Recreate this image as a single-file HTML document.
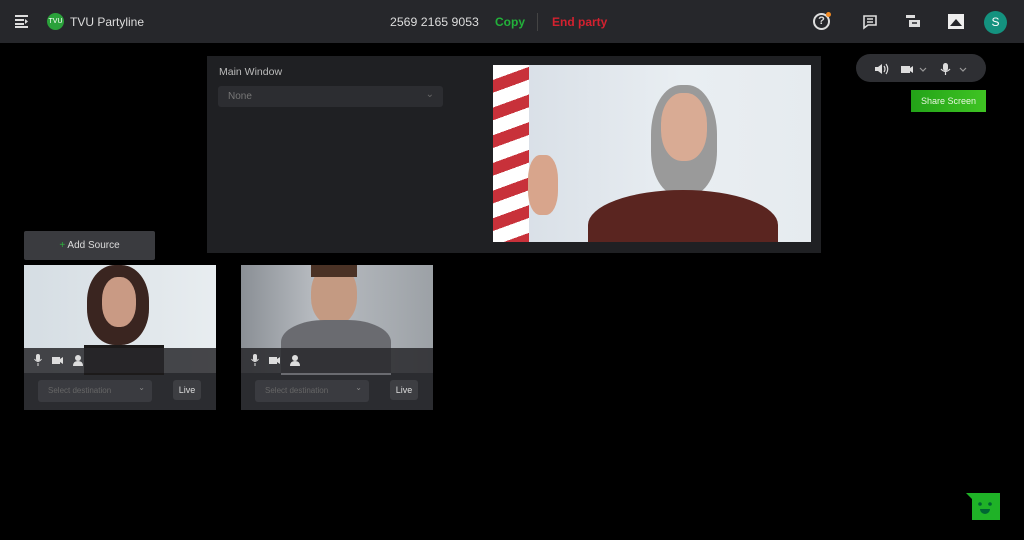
<!DOCTYPE html>
<html><head><meta charset="utf-8"><style>
*{margin:0;padding:0;box-sizing:border-box}
body{width:1024px;height:540px;background:#000;font-family:"Liberation Sans",sans-serif;position:relative;overflow:hidden;color:#ddd}
.hdr{position:absolute;left:0;top:0;width:1024px;height:43px;background:#26272b}
.abs{position:absolute}
.panel{left:207px;top:56px;width:614px;height:197px;background:#1f2023}
.card{position:absolute;top:265px;width:192px;height:145px;background:#2b2c30;overflow:hidden}
.ctrl{position:absolute;left:0;top:83px;width:192px;height:25px;background:rgba(40,40,44,.85)}
.sel{position:absolute;left:14px;top:115px;width:114px;height:22px;background:#3a3b40;border-radius:3px;font-size:8px;color:#666;padding:6px 10px}
.live{position:absolute;left:149px;top:115px;width:28px;height:20px;background:#3d3e42;border-radius:3px;font-size:9px;color:#ddd;text-align:center;line-height:20px}
</style></head><body>
<div class="hdr"></div>
<svg class="abs" style="left:15px;top:15px" width="14" height="13"><g fill="#ddd"><rect x="0" y="0" width="13" height="2"/><rect x="0" y="4" width="9" height="2"/><rect x="0" y="8" width="9" height="2"/><rect x="0" y="11" width="13" height="2"/><path d="M10 4l3 2.5-3 2.5z"/></g></svg>
<div class="abs" style="left:47px;top:13px;width:17px;height:17px;border-radius:50%;background:#2aa13a;font-size:7px;color:#fff;text-align:center;line-height:17px">TVU</div>
<div class="abs" style="left:70px;top:15px;font-size:12px;color:#ddd">TVU Partyline</div>
<div class="abs" style="left:390px;top:15px;font-size:12.3px;color:#ddd">2569 2165 9053</div>
<div class="abs" style="left:495px;top:15px;font-size:12px;color:#22b13a;font-weight:bold">Copy</div>
<div class="abs" style="left:537px;top:13px;width:1px;height:18px;background:#444"></div>
<div class="abs" style="left:552px;top:15px;font-size:12px;color:#d3212f;font-weight:bold">End party</div>
<div class="abs" style="left:813px;top:13px;width:17px;height:17px;border:2px solid #ddd;border-radius:50%;font-size:11px;font-weight:bold;color:#ddd;text-align:center;line-height:13px">?</div>
<div class="abs" style="left:826px;top:12px;width:5px;height:5px;border-radius:50%;background:#f08a24"></div>
<svg class="abs" style="left:862px;top:14px" width="16" height="16"><path d="M2 2h12v9H6l-4 3z" fill="none" stroke="#ddd" stroke-width="1.6"/><path d="M5 5h6M5 8h6" stroke="#ddd" stroke-width="1.4"/></svg>
<svg class="abs" style="left:905px;top:14px" width="16" height="14"><path d="M1 1h9v3H1zM4 6h11v7H4z" fill="#ddd"/><path d="M7 9h5" stroke="#26272b" stroke-width="1.5"/></svg>
<svg class="abs" style="left:948px;top:14px" width="16" height="15"><rect width="16" height="15" fill="#eee"/><path d="M2 12l6-7 6 7z" fill="#26272b"/></svg>
<div class="abs" style="left:984px;top:11px;width:23px;height:23px;border-radius:50%;background:#14927f;color:#fff;font-size:12px;text-align:center;line-height:23px">S</div>

<div class="abs panel"></div>
<div class="abs" style="left:219px;top:66px;font-size:10.5px;color:#bbb">Main Window</div>
<div class="abs" style="left:218px;top:86px;width:225px;height:21px;background:#2c2d31;border-radius:3px;font-size:10px;color:#777;padding:5px 10px">None<span style="position:absolute;right:9px;top:3px;color:#666">⌄</span></div>
<div class="abs" style="left:493px;top:65px;width:318px;height:177px;background:linear-gradient(90deg,#d6dde5,#e9eef2 60%,#e6ebef);overflow:hidden">
 <div class="abs" style="left:0;top:0;width:36px;height:177px;background:repeating-linear-gradient(160deg,#fff 0 14px,#c8313a 14px 26px)"></div>
 <div class="abs" style="left:158px;top:20px;width:66px;height:110px;border-radius:45% 45% 40% 40%;background:#9a9a9a"></div>
 <div class="abs" style="left:168px;top:28px;width:46px;height:68px;border-radius:45%;background:#d9ab94"></div>
 <div class="abs" style="left:95px;top:125px;width:190px;height:70px;border-radius:50% 50% 0 0;background:#5a2520"></div>
 <div class="abs" style="left:35px;top:90px;width:30px;height:60px;border-radius:40%;background:#d8a58c"></div>
</div>

<div class="abs" style="left:856px;top:54px;width:130px;height:28px;background:#2e2f33;border-radius:14px"></div>
<svg class="abs" style="left:874px;top:62px" width="100" height="14">
 <path d="M1 5h3l4-3v10l-4-3H1z" fill="#ddd"/><path d="M10 4q2 3 0 6M12 2q3.5 5 0 10" stroke="#ddd" fill="none" stroke-width="1.2"/>
 <rect x="27" y="4" width="9" height="7" fill="#ddd"/><path d="M36 6l3-2v7l-3-2z" fill="#ddd"/>
 <path d="M46 6l3 3 3-3" stroke="#999" fill="none" stroke-width="1.2"/>
 <rect x="69" y="1" width="5" height="8" rx="2.5" fill="#ddd"/><path d="M67 7q4.5 5 9 0M71.5 10v3" stroke="#ddd" fill="none" stroke-width="1.2"/>
 <path d="M86 6l3 3 3-3" stroke="#999" fill="none" stroke-width="1.2"/>
</svg>
<div class="abs" style="left:911px;top:90px;width:75px;height:22px;background:linear-gradient(90deg,#23a318,#3fc423);font-size:9px;color:#e8f5e0;text-align:center;line-height:22px">Share Screen</div>

<div class="abs" style="left:24px;top:231px;width:131px;height:29px;background:#3a3b3f;border-radius:2px;font-size:10px;color:#ddd;text-align:center;line-height:29px"><span style="color:#2db53d">+</span> Add Source</div>

<div class="card" style="left:24px">
 <div class="abs" style="left:0;top:0;width:192px;height:108px;background:linear-gradient(90deg,#d5dde3,#e8edf0)"></div>
 <div class="abs" style="left:63px;top:0;width:62px;height:80px;border-radius:45%;background:#3a2520"></div>
 <div class="abs" style="left:78px;top:12px;width:34px;height:50px;border-radius:45%;background:#c99a84"></div>
 <div class="abs" style="left:60px;top:80px;width:80px;height:30px;background:#1c1a1a"></div>
 <div class="ctrl"></div>
 <svg class="abs" style="left:10px;top:89px" width="50" height="12"><rect x="2" y="0" width="4" height="7" rx="2" fill="#ddd"/><path d="M0.5 5q3.5 5 7 0M4 9v3" stroke="#ddd" fill="none"/><rect x="18" y="3" width="8" height="7" fill="#ddd"/><path d="M26 5l3-2v7l-3-2z" fill="#ddd"/><circle cx="44" cy="4" r="3" fill="#ddd"/><path d="M39 12q0-5 5-5t5 5z" fill="#ddd"/></svg>
 <div class="sel">Select destination<span style="position:absolute;right:7px;top:3px;color:#888">⌄</span></div>
 <div class="live">Live</div>
</div>
<div class="card" style="left:241px">
 <div class="abs" style="left:0;top:0;width:192px;height:108px;background:linear-gradient(90deg,#8a8f95,#b9bdc2 40%,#9ca1a6)"></div>
 <div class="abs" style="left:70px;top:0;width:46px;height:60px;border-radius:45%;background:#c49a82"></div>
 <div class="abs" style="left:70px;top:0;width:46px;height:12px;background:#4a3225"></div>
 <div class="abs" style="left:40px;top:55px;width:110px;height:55px;border-radius:40% 40% 0 0;background:#6a6b70"></div>
 <div class="ctrl"></div>
 <svg class="abs" style="left:10px;top:89px" width="50" height="12"><rect x="2" y="0" width="4" height="7" rx="2" fill="#ddd"/><path d="M0.5 5q3.5 5 7 0M4 9v3" stroke="#ddd" fill="none"/><rect x="18" y="3" width="8" height="7" fill="#ddd"/><path d="M26 5l3-2v7l-3-2z" fill="#ddd"/><circle cx="44" cy="4" r="3" fill="#ddd"/><path d="M39 12q0-5 5-5t5 5z" fill="#ddd"/></svg>
 <div class="sel">Select destination<span style="position:absolute;right:7px;top:3px;color:#888">⌄</span></div>
 <div class="live">Live</div>
</div>

<svg class="abs" style="left:964px;top:493px" width="38" height="28"><path d="M2 0h34v27H8V6z" fill="#1fb227"/><circle cx="16" cy="11" r="1.8" fill="#063"/><circle cx="26" cy="11" r="1.8" fill="#063"/><path d="M16 16h10a5 5 0 0 1-10 0z" fill="#063"/></svg>
</body></html>
